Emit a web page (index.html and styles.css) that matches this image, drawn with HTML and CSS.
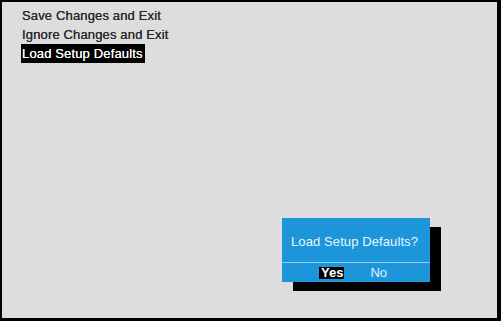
FILE: index.html
```html
<!DOCTYPE html>
<html>
<head>
	<meta charset="UTF-8">
	<title>Exit</title>
	<link rel="stylesheet" href="styles.css">
</head>
<body>
	<div class="scr">
		<ul class="menu">
			<li><span>Save Changes and Exit</span></li>
			<li><span>Ignore Changes and Exit</span></li>
			<li class="sel"><span>Load Setup Defaults</span></li>
		</ul>
		<div class="dlg">
			<div class="dlgttl">Load Setup Defaults?</div>
			<div class="dlgbtns">
				<span class="btn sel">Yes</span>
				<span class="btn">No</span>
			</div>
		</div>
	</div>
</body>
</html>
```
FILE: styles.css
```css
html, body { margin: 0; padding: 0; background: #000; }
body { font-family: "Liberation Sans", Arial, sans-serif; font-size: 13px; }
.scr { width: 501px; height: 321px; box-sizing: border-box; background: #dddddd;
	border-style: solid; border-color: #000; border-width: 2px 4px 3px 2px;
	display: flex; flex-direction: column; }
.menu { list-style: none; margin: 0; padding: 4px 0 0 19px; color: #2a2a2a; letter-spacing: 0.15px;
	text-shadow: 0 0 0.5px #2a2a2a; }
.menu li { line-height: 19px; }
.menu li span { padding: 0 2px 0 1px; display: inline-block; }
.menu li.sel span { background: #000; color: #fff; text-shadow: 0 0 0.5px #fff; }
.dlg { margin: auto 67px 36px auto; width: 148px; height: 64px; background: #1c95da;
	box-shadow: 11px 9px 0 #000; display: flex; flex-direction: column; color: #eaf5fc; }
.dlgttl { height: 45px; box-sizing: border-box; padding: 17px 0 0 9px; line-height: 14px;
	border-bottom: 1px solid #8ed0f5; letter-spacing: 0.1px; }
.dlgbtns { flex: 1; display: flex; align-items: center; padding-left: 37px; gap: 26px; }
.btn { line-height: 12px; color: #e4f2fb; }
.btn.sel { background: #000; color: #fff; font-weight: bold; padding: 0 1px 0 2px; }
```
